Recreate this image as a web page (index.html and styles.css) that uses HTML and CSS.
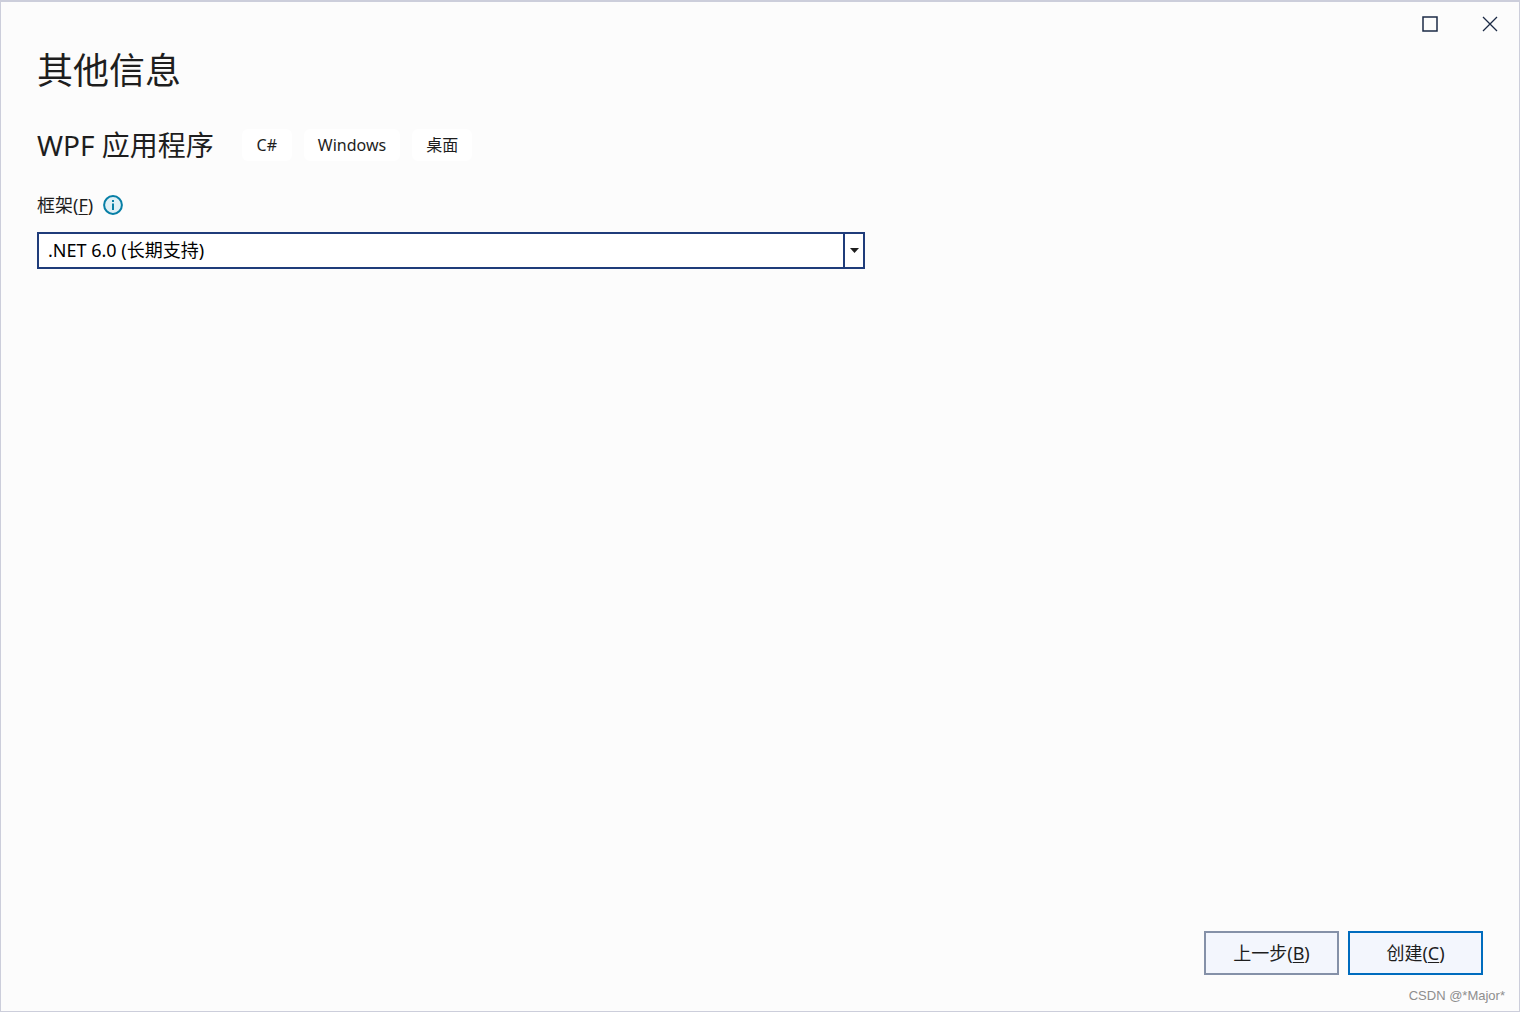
FILE: index.html
```html
<!DOCTYPE html>
<html lang="zh-CN">
<head>
<meta charset="utf-8">
<title>其他信息</title>
<link rel="stylesheet" href="styles.css">
</head>
<body>
<div class="window">
  <header class="titlebar">
    <button class="caption-button" type="button" aria-label="最大化">
      <svg width="16" height="16" viewBox="0 0 16 16"><rect x="1" y="1" width="14" height="14" fill="none" stroke="#1b2a45" stroke-width="1.5"/></svg>
    </button>
    <button class="caption-button" type="button" aria-label="关闭">
      <svg width="16" height="16" viewBox="0 0 16 16"><path d="M1 1 15 15M15 1 1 15" fill="none" stroke="#1b2a45" stroke-width="1.3"/></svg>
    </button>
  </header>
  <main class="content">
    <h1 class="title">其他信息</h1>
    <div class="template">
      <h2 class="template-name">WPF 应用程序</h2>
      <ul class="tags">
        <li class="tag">C#</li>
        <li class="tag">Windows</li>
        <li class="tag">桌面</li>
      </ul>
    </div>
    <div class="field-head">
      <label for="framework">框架(<u>F</u>)</label>
      <svg class="info" width="20" height="20" viewBox="0 0 20 20" aria-hidden="true"><circle cx="10" cy="10" r="8.900" fill="#dff0f6" stroke="#077fa6" stroke-width="2"/><path d="M9 5h2v2H9zM9 8.500h2V15H9z" fill="#077fa6"/></svg>
    </div>
    <div class="combo">
      <select class="combo-select" id="framework">
        <option>.NET 6.0 (长期支持)</option>
      </select>
      <span class="combo-arrow"><svg width="9" height="5" viewBox="0 0 9 5" aria-hidden="true"><path d="M0 0h9L4.500 5z" fill="#1e1e1e"/></svg></span>
    </div>
  </main>
  <footer class="footer">
    <div class="actions">
      <button class="action" type="button">上一步(<u>B</u>)</button>
      <button class="action action-primary" type="button">创建(<u>C</u>)</button>
    </div>
    <p class="credit">CSDN @*Major*</p>
  </footer>
</div>
</body>
</html>
```
FILE: styles.css
```css
* {
  box-sizing: border-box;
}

body {
  margin: 0;
  color: #1e1e1e;
  font-family: "Noto Sans", "Noto Sans CJK SC", sans-serif;
  font-size: 18px;
  line-height: 24px;
}

.window {
  display: flex;
  flex-direction: column;
  min-height: 100vh;
  border: 1px solid #cccedb;
  border-top-width: 2px;
  background: #fcfcfc;
}

.titlebar {
  display: flex;
  justify-content: flex-end;
  margin-right: -1px;
}

.caption-button {
  display: flex;
  align-items: center;
  justify-content: center;
  width: 60px;
  height: 44px;
  padding: 0;
  border: 0;
  background: transparent;
}

.content {
  flex: 1;
  padding: 0 36px;
}

.title {
  margin: 0;
  font-size: 36px;
  font-weight: 400;
  line-height: 50px;
}

.template {
  display: flex;
  align-items: center;
  gap: 28px;
  margin-top: 29px;
}

.template-name {
  margin: 0;
  font-size: 28px;
  font-weight: 400;
  line-height: 40px;
}

.tags {
  display: flex;
  gap: 12px;
  margin: 0;
  padding: 0;
  list-style: none;
}

.tag {
  min-width: 50px;
  padding: 4px 14px;
  border-radius: 6px;
  background: #fff;
  font-size: 16px;
  text-align: center;
}

.field-head {
  display: flex;
  align-items: center;
  gap: 10px;
  margin-top: 28px;
}

u {
  text-underline-offset: 2px;
}

.info {
  overflow: visible;
}

.combo {
  position: relative;
  max-width: 828px;
  margin-top: 15px;
}

.combo-select {
  display: block;
  width: 100%;
  height: 37px;
  padding: 0 32px 2px 9px;
  border: 2px solid #1f3c7a;
  border-radius: 0;
  appearance: none;
  background: #fff;
  color: #000;
  font: inherit;
}

.combo-arrow {
  position: absolute;
  top: 0;
  right: 0;
  bottom: 0;
  display: flex;
  align-items: center;
  justify-content: center;
  width: 22px;
  border: 2px solid #1f3c7a;
  pointer-events: none;
}

.footer {
  padding: 0 14px 5px 36px;
}

.actions {
  display: flex;
  justify-content: flex-end;
  gap: 9px;
  padding-right: 22px;
}

.action {
  width: 135px;
  height: 44px;
  padding: 0;
  border: 2px solid #8591a8;
  background: #f3f6fd;
  color: #1e1e1e;
  font: inherit;
}

.action-primary {
  border-color: #006cbe;
}

.credit {
  margin: 11px 0 0;
  color: #8e8e8e;
  font-family: "Liberation Sans", sans-serif;
  font-size: 13px;
  line-height: 20px;
  text-align: right;
}
```
